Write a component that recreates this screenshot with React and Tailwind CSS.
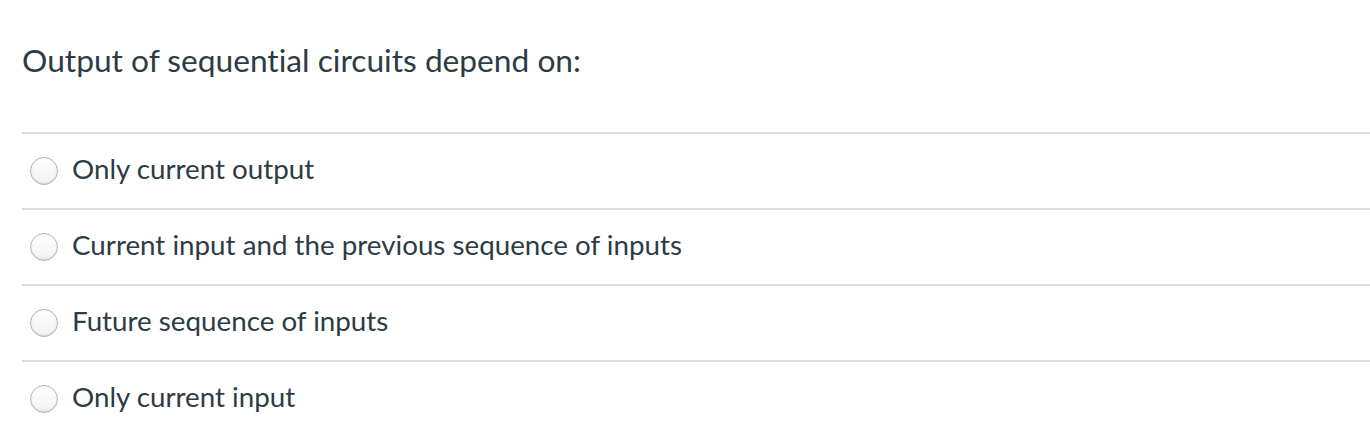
export default function App() {
  const options = [
    "Only current output",
    "Current input and the previous sequence of inputs",
    "Future sequence of inputs",
    "Only current input",
  ];
  return (
    <div className="w-[1370px] h-[448px] bg-white overflow-hidden text-[#2d3b45] [font-variant-ligatures:none]" style={{ fontFamily: "Lato, 'Noto Sans', sans-serif" }}>
      <div className="pl-[22px]">
        <div className="h-[132px] pt-[40px] text-[31.7px] leading-[40px]">Output of sequential circuits depend on:</div>
        {options.map((o) => (
          <div key={o} className="border-t-2 border-[#dddddd] h-[76px] flex items-center">
            <span className="ml-[8px] w-[28px] h-[28px] rounded-full border border-[#b5b5b5] bg-gradient-to-b from-white to-[#f2f2f2] shadow-[inset_0_-1px_2px_rgba(0,0,0,0.12)] shrink-0"></span>
            <span className="ml-[14px] mb-[4px] text-[27.75px] leading-[36px]">{o}</span>
          </div>
        ))}
      </div>
    </div>
  );
}
